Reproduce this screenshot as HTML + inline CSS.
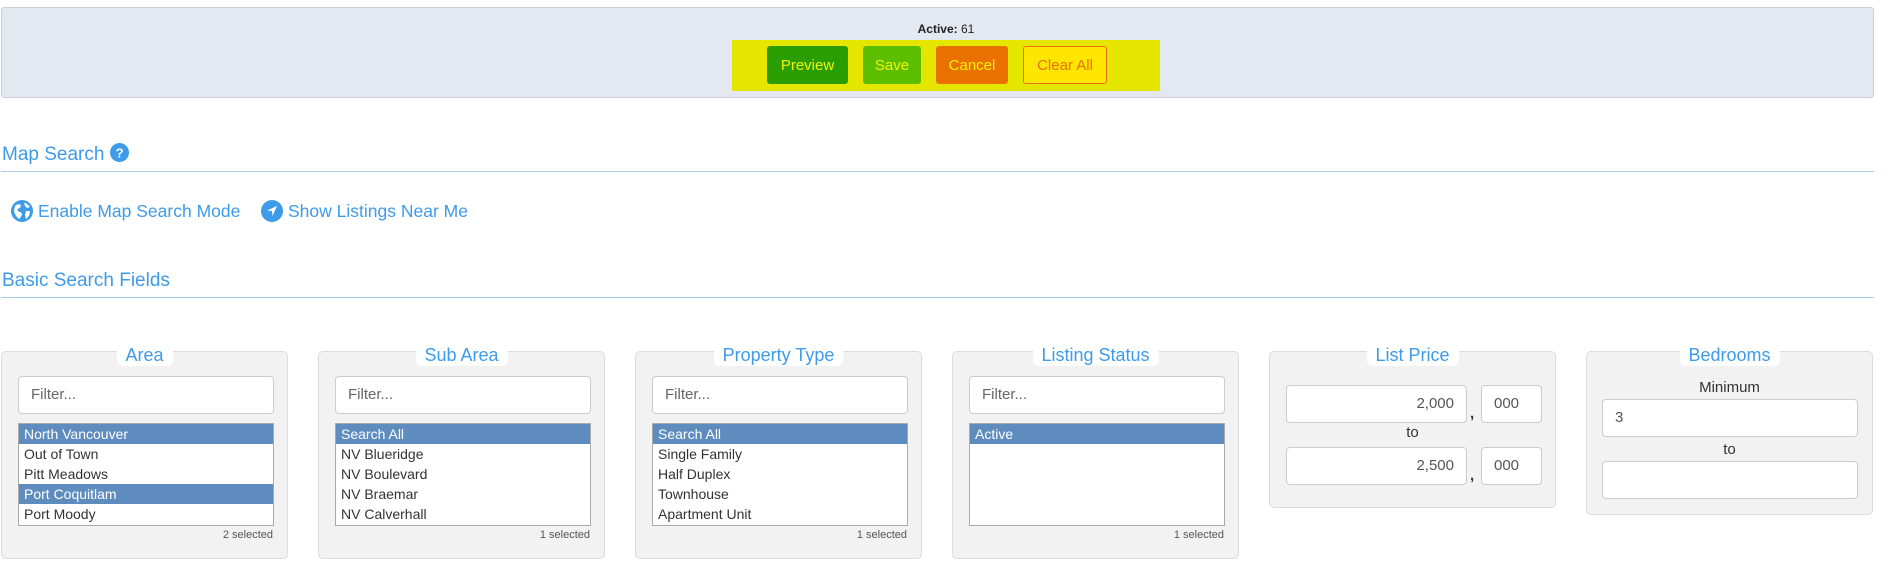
<!DOCTYPE html>
<html><head><meta charset="utf-8"><style>
*{box-sizing:border-box;margin:0;padding:0}
body{width:1892px;height:574px;background:#fff;font-family:"Liberation Sans",sans-serif;position:relative;overflow:hidden;color:#333}
.a{position:absolute}
.top{left:1px;top:7px;width:1873px;height:91px;background:#e4e8f0;border:1px solid #c9cfd9;border-radius:3px}
.yb{left:732px;top:40px;width:428px;height:51px;background:#e5e600}
.btn{position:absolute;top:46px;height:38px;border-radius:3px;color:#f2f200;font-size:15px;display:flex;align-items:center;justify-content:center}
.h{color:#3d9be9;font-size:19px}
.line{height:1px;background:#a8cfe6;left:1px;width:1873px}
.lnk{color:#3d9be9;font-size:17.5px}
.p{position:absolute;top:351px;width:287px;height:208px;background:#f2f2f2;border:1px solid #dcdcdc;border-radius:5px}
.lg{position:absolute;top:-8px;left:50%;transform:translateX(-50%);background:#fff;color:#3d9be9;font-size:18px;padding:0 9px;border-radius:0 0 6px 6px;line-height:22px;white-space:nowrap}
.f{position:absolute;left:16px;top:24px;width:256px;height:38px;background:#fff;border:1px solid #ccc;border-radius:4px;font-size:15px;color:#666;padding:9px 12px}
.lb{position:absolute;left:16px;top:71px;width:256px;height:103px;background:#fff;border:1px solid #aaa;font-size:14px;color:#333}
.lb div{height:20px;line-height:20px;padding-left:5px}
.lb .s{background:#5f8cbf;color:#fff}
.sel{position:absolute;right:14px;top:177px;font-size:11px;color:#555}
.in{position:absolute;background:#fff;border:1px solid #ccc;border-radius:4px;font-size:15px;color:#555;height:38px;line-height:36px;padding:0 12px}
.c{position:absolute;font-size:15px;color:#333;text-align:center}
</style></head><body>
<div class="a top"></div>
<div class="a" style="left:0;width:1892px;top:22px;text-align:center;font-size:12px;color:#222"><b>Active:</b> 61</div>
<div class="a yb"></div>
<div class="btn" style="left:767px;width:81px;background:#2a9d00">Preview</div>
<div class="btn" style="left:863px;width:58px;background:#5bbf00">Save</div>
<div class="btn" style="left:936px;width:72px;background:#ea7000">Cancel</div>
<div class="btn" style="left:1023px;width:84px;background:#ffe600;border:1px solid #ea7000;color:#ea7000">Clear All</div>

<div class="a h" style="left:2px;top:143px">Map Search <svg width="19" height="19" viewBox="0 0 20 20" style="vertical-align:-2px"><circle cx="10" cy="10" r="10" fill="#3d9be9"/><text x="10" y="15" text-anchor="middle" font-size="14" font-weight="bold" fill="#fff" font-family="Liberation Sans">?</text></svg></div>
<div class="a line" style="top:171px"></div>
<svg class="a" style="left:11px;top:200px" width="22" height="22" viewBox="0 0 22 22"><circle cx="11" cy="11" r="11" fill="#3d9be9"/><path d="M4 6 Q7 3 10 5 L9 8 L6 9 L8 12 L10 12 L11 15 L9 18 L8 19 Q4 16 3 11 Z M13 2.5 Q17 4 19 7 L16 8 L14 6 Z M15 11 L19 11 Q19 16 15 19 L14 15 Z" fill="#fff"/></svg>
<div class="a lnk" style="left:38px;top:201px">Enable Map Search Mode</div>
<svg class="a" style="left:261px;top:200px" width="22" height="22" viewBox="0 0 22 22"><circle cx="11" cy="11" r="11" fill="#3d9be9"/><path d="M16 6 L6 10.5 L11 11 L11.5 16 Z" fill="#fff"/></svg>
<div class="a lnk" style="left:288px;top:201px">Show Listings Near Me</div>

<div class="a h" style="left:2px;top:270px">Basic Search Fields</div>
<div class="a line" style="top:297px"></div>

<div class="p" style="left:1px"><div class="lg">Area</div><div class="f">Filter...</div>
<div class="lb"><div class="s">North Vancouver</div><div>Out of Town</div><div>Pitt Meadows</div><div class="s">Port Coquitlam</div><div>Port Moody</div></div><div class="sel">2 selected</div></div>
<div class="p" style="left:318px"><div class="lg">Sub Area</div><div class="f">Filter...</div>
<div class="lb"><div class="s">Search All</div><div>NV Blueridge</div><div>NV Boulevard</div><div>NV Braemar</div><div>NV Calverhall</div></div><div class="sel">1 selected</div></div>
<div class="p" style="left:635px"><div class="lg">Property Type</div><div class="f">Filter...</div>
<div class="lb"><div class="s">Search All</div><div>Single Family</div><div>Half Duplex</div><div>Townhouse</div><div>Apartment Unit</div></div><div class="sel">1 selected</div></div>
<div class="p" style="left:952px"><div class="lg">Listing Status</div><div class="f">Filter...</div>
<div class="lb"><div class="s">Active</div></div><div class="sel">1 selected</div></div>
<div class="p" style="left:1269px;height:157px"><div class="lg">List Price</div></div>
<div class="p" style="left:1586px;height:164px"><div class="lg">Bedrooms</div></div>

<div class="in" style="left:1286px;top:385px;width:181px;text-align:right">2,000</div>
<div class="c" style="left:1470px;top:405px;font-weight:bold">,</div>
<div class="in" style="left:1481px;top:385px;width:61px">000</div>
<div class="c" style="left:1269px;width:287px;top:424px">to</div>
<div class="in" style="left:1286px;top:447px;width:181px;text-align:right">2,500</div>
<div class="c" style="left:1470px;top:467px;font-weight:bold">,</div>
<div class="in" style="left:1481px;top:447px;width:61px">000</div>

<div class="c" style="left:1586px;width:287px;top:379px">Minimum</div>
<div class="in" style="left:1602px;top:399px;width:256px">3</div>
<div class="c" style="left:1586px;width:287px;top:441px">to</div>
<div class="in" style="left:1602px;top:461px;width:256px"></div>
</body></html>
